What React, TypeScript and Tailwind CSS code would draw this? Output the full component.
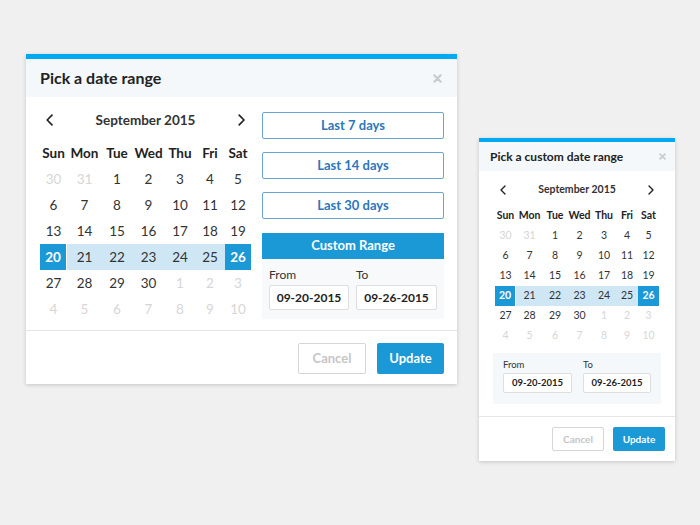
import React from "react";

type Cell = { d: number; muted?: boolean };

const weeks: Cell[][] = [
  [{ d: 30, muted: true }, { d: 31, muted: true }, { d: 1 }, { d: 2 }, { d: 3 }, { d: 4 }, { d: 5 }],
  [{ d: 6 }, { d: 7 }, { d: 8 }, { d: 9 }, { d: 10 }, { d: 11 }, { d: 12 }],
  [{ d: 13 }, { d: 14 }, { d: 15 }, { d: 16 }, { d: 17 }, { d: 18 }, { d: 19 }],
  [{ d: 20 }, { d: 21 }, { d: 22 }, { d: 23 }, { d: 24 }, { d: 25 }, { d: 26 }],
  [{ d: 27 }, { d: 28 }, { d: 29 }, { d: 30 }, { d: 1, muted: true }, { d: 2, muted: true }, { d: 3, muted: true }],
  [4, 5, 6, 7, 8, 9, 10].map((d) => ({ d, muted: true })),
];

const dayNames = ["Sun", "Mon", "Tue", "Wed", "Thu", "Fri", "Sat"];

function Chevron({ dir, size }: { dir: "left" | "right"; size: number }) {
  return (
    <svg width={size * 0.6} height={size} viewBox="0 0 6 10" fill="none">
      <path
        d={dir === "left" ? "M5 1 L1 5 L5 9" : "M1 1 L5 5 L1 9"}
        stroke="#222"
        strokeWidth="1.4"
        strokeLinecap="round"
        strokeLinejoin="round"
      />
    </svg>
  );
}

function CloseIcon({ size }: { size: number }) {
  return (
    <svg width={size} height={size} viewBox="0 0 10 10">
      <path d="M1.5 1.5 L8.5 8.5 M8.5 1.5 L1.5 8.5" stroke="#c7cbce" strokeWidth="2.4" strokeLinecap="round" />
    </svg>
  );
}

function Calendar({ small }: { small?: boolean }) {
  const cols = small ? "grid-cols-[21px_27px_24px_25px_24px_22px_21px]" : "grid-cols-[27px_35px_30px_33px_30px_30px_26px]";
  const rowH = small ? "h-[20px]" : "h-[26px]";
  const text = small ? "text-[10.5px]" : "text-[13.5px]";
  return (
    <div className={small ? "w-[164px]" : "w-[211px]"}>
      <div className={`flex items-center justify-between ${small ? "h-[18px] px-[5px] mb-[7px]" : "h-[30px] px-[6px] mb-[5px]"}`}>
        <Chevron dir="left" size={small ? 10 : 12} />
        <span className={`font-bold text-[#333] ${small ? "text-[10.5px]" : "text-[13.5px]"}`}>September 2015</span>
        <Chevron dir="right" size={small ? 10 : 12} />
      </div>
      <div className={`grid ${cols}`}>
        {dayNames.map((n) => (
          <div key={n} className={`${rowH} flex items-center justify-center font-bold text-[#222] ${text}`}>
            {n}
          </div>
        ))}
        {weeks.flat().map((c, i) => {
          const row = Math.floor(i / 7);
          const col = i % 7;
          const sel = row === 3;
          const edge = sel && (col === 0 || col === 6);
          let cls = "text-[#333]";
          if (c.muted) cls = "text-[#d6d6d6]";
          if (sel) cls = edge ? "bg-[#1b98d6] text-white font-bold" : "bg-[#cfe7f5] text-[#333]";
          if (sel && col === 0) cls += " border-r border-white";
          return (
            <div key={i} className={`${rowH} flex items-center justify-center ${text} ${cls}`}>
              {c.d}
            </div>
          );
        })}
      </div>
    </div>
  );
}

function OutlineButton({ label }: { label: string }) {
  return (
    <button className="h-[27px] w-full rounded-[2px] border border-[#69a6d6] bg-white text-[13px] font-bold text-[#2c77bb]">
      {label}
    </button>
  );
}

export default function App() {
  return (
    <div
      className="flex w-[700px] h-[525px] items-start gap-[22px] bg-[#f0f0f0] pl-[26px] pt-[54px]"
      style={{ fontFamily: "Lato, 'Liberation Sans', sans-serif" }}
    >
      {/* large dialog */}
      <div className="w-[431px] bg-white shadow-[0_1px_4px_rgba(0,0,0,0.18)]">
        <div className="h-[5px] bg-[#00a9f1]" />
        <div className="flex h-[38px] items-center justify-between bg-[#f4f8fb] pl-[14px] pr-[15px]">
          <span className="text-[16px] font-bold text-[#222]">Pick a date range</span>
          <CloseIcon size={9} />
        </div>
        <div className="flex items-start gap-[11px] px-[14px] pt-[8px] pb-[8px]">
          <Calendar />
          <div className="flex flex-1 flex-col pt-[7px]">
            <div className="flex flex-col gap-[13px]">
              <OutlineButton label="Last 7 days" />
              <OutlineButton label="Last 14 days" />
              <OutlineButton label="Last 30 days" />
            </div>
            <button className="mt-[14px] h-[26px] w-full bg-[#1b98d6] text-[13px] font-bold text-white">
              Custom Range
            </button>
            <div className="flex gap-[7px] bg-[#f7f9fb] px-[7px] pt-[8px] pb-[9px]">
              <div className="flex flex-col gap-[3px]">
                <span className="text-[12px] leading-[15px] text-[#333]">From</span>
                <div className="flex h-[25px] w-[80px] items-center justify-center rounded-[2px] border border-[#dedede] bg-white text-[12px] font-bold text-[#222]">
                  09-20-2015
                </div>
              </div>
              <div className="flex flex-col gap-[3px]">
                <span className="text-[12px] leading-[15px] text-[#333]">To</span>
                <div className="flex h-[25px] w-[81px] items-center justify-center rounded-[2px] border border-[#dedede] bg-white text-[12px] font-bold text-[#222]">
                  09-26-2015
                </div>
              </div>
            </div>
          </div>
        </div>
        <div className="flex justify-end gap-[11px] border-t border-[#e6e6e6] pt-[12px] pb-[10px] pr-[13px]">
          <button className="h-[31px] w-[68px] rounded-[2px] border border-[#d6d6d6] bg-white text-[13px] font-bold text-[#c6c6c6]">
            Cancel
          </button>
          <button className="h-[31px] w-[67px] rounded-[2px] bg-[#1b98d6] text-[13px] font-bold text-white">
            Update
          </button>
        </div>
      </div>

      {/* small dialog */}
      <div className="mt-[84px] w-[196px] bg-white shadow-[0_1px_4px_rgba(0,0,0,0.18)]">
        <div className="h-[4px] bg-[#00a9f1]" />
        <div className="flex h-[29px] items-center justify-between bg-[#f4f8fb] pl-[11px] pr-[9px]">
          <span className="text-[12px] font-bold text-[#222]">Pick a custom date range</span>
          <CloseIcon size={7} />
        </div>
        <div className="px-[16px] pt-[10px] pb-[12px]">
          <Calendar small />
          <div className="-mx-[2px] mt-[7px] flex gap-[11px] bg-[#f4f8fb] pl-[10px] pt-[6px] pb-[11px]">
            <div className="flex flex-col gap-[3px]">
              <span className="text-[9.5px] leading-[11px] text-[#333]">From</span>
              <div className="flex h-[20px] w-[69px] items-center justify-center rounded-[2px] border border-[#dedede] bg-white text-[9.5px] font-bold text-[#222]">
                09-20-2015
              </div>
            </div>
            <div className="flex flex-col gap-[3px]">
              <span className="text-[9.5px] leading-[11px] text-[#333]">To</span>
              <div className="flex h-[20px] w-[68px] items-center justify-center rounded-[2px] border border-[#dedede] bg-white text-[9.5px] font-bold text-[#222]">
                09-26-2015
              </div>
            </div>
          </div>
        </div>
        <div className="flex justify-end gap-[9px] border-t border-[#e6e6e6] pt-[10px] pb-[10px] pr-[10px]">
          <button className="h-[24px] w-[52px] rounded-[2px] border border-[#d6d6d6] bg-white text-[10px] font-bold text-[#c6c6c6]">
            Cancel
          </button>
          <button className="h-[24px] w-[52px] rounded-[2px] bg-[#1b98d6] text-[10px] font-bold text-white">
            Update
          </button>
        </div>
      </div>
    </div>
  );
}
